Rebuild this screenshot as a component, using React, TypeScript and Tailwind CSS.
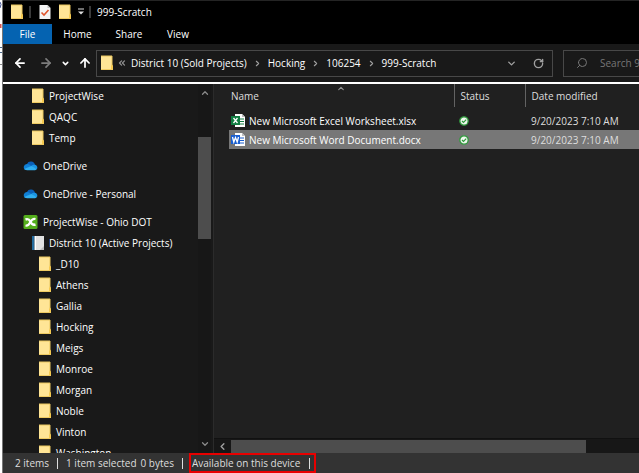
import React from 'react';
import { ArrowLeft, ArrowRight, ArrowUp, ChevronDown, ChevronLeft, ChevronRight, ChevronUp, ChevronsLeft, RotateCw, Search } from 'lucide-react';

interface TreeNode {
  name: string;
  icon: 'folder' | 'cloud' | 'pw' | 'book';
  level: number;
  spaced?: boolean;
}

const tree: TreeNode[] = [
  { name: 'ProjectWise', icon: 'folder', level: 1 },
  { name: 'QAQC', icon: 'folder', level: 1 },
  { name: 'Temp', icon: 'folder', level: 1 },
  { name: 'OneDrive', icon: 'cloud', level: 0, spaced: true },
  { name: 'OneDrive - Personal', icon: 'cloud', level: 0, spaced: true },
  { name: 'ProjectWise - Ohio DOT', icon: 'pw', level: 0, spaced: true },
  { name: 'District 10 (Active Projects)', icon: 'book', level: 1 },
  { name: '_D10', icon: 'folder', level: 2 },
  { name: 'Athens', icon: 'folder', level: 2 },
  { name: 'Gallia', icon: 'folder', level: 2 },
  { name: 'Hocking', icon: 'folder', level: 2 },
  { name: 'Meigs', icon: 'folder', level: 2 },
  { name: 'Monroe', icon: 'folder', level: 2 },
  { name: 'Morgan', icon: 'folder', level: 2 },
  { name: 'Noble', icon: 'folder', level: 2 },
  { name: 'Vinton', icon: 'folder', level: 2 },
  { name: 'Washington', icon: 'folder', level: 2 },
];

const indent = ['pl-5', 'pl-[29px]', 'pl-9'];

const files = [
  { name: 'New Microsoft Excel Worksheet.xlsx', kind: 'excel', date: '9/20/2023 7:10 AM', selected: false },
  { name: 'New Microsoft Word Document.docx', kind: 'word', date: '9/20/2023 7:10 AM', selected: true },
];

const crumbs = ['District 10 (Sold Projects)', 'Hocking', '106254', '999-Scratch'];

const FolderIcon = () => (
  <svg viewBox="0 0 12 16" className="w-3 h-4 shrink-0">
    <path d="M0 1h11v9l1 1v4H0z" fill="#ffe596" />
    <path d="M0 1h11v9" fill="none" stroke="#e9c65e" strokeWidth="1" />
    <path d="M10 10.500l1-1 1 1V15h-2z" fill="#f6c94f" />
    <path d="M0 14.500h12" stroke="#efcb62" />
  </svg>
);

const CloudIcon = () => (
  <svg viewBox="0 2 16 11" className="w-[15px] h-[11px] shrink-0">
    <path d="M4.200 5.900A4.600 4.600 0 0 1 12.800 6.800L9 10 4 8z" fill="#0a5fb8" />
    <path d="M4.200 5.900c2 0 3.100 1 4.400 1.900L3 12.300A3.300 3.300 0 0 1 4.200 5.900z" fill="#1080d6" />
    <path d="M8.600 8c1.500-1.500 3-1.500 4.200-1.200a3 3 0 0 1 2 4.500L8 10z" fill="#1a94e4" />
    <path d="M1.300 11.300 8.600 8l6.300 3.300c-.5.800-1.200 1.200-2 1.200H4.200c-1.200 0-2.300-.4-2.900-1.200z" fill="#30aff0" />
  </svg>
);

const ProjectWiseIcon = () => (
  <svg viewBox="0 0 14 14" className="w-[15px] h-[14px] shrink-0">
    <rect width="14" height="14" rx="1.500" fill="#54ae1c" />
    <path d="M2 4.500c3.500-1.200 4 .5 5 2.500s2 3.500 5 2.500" fill="none" stroke="#fff" strokeWidth="2.400" />
    <path d="M2 10.500c3 .5 4-1.500 5-3.500s2.500-3.500 5-3" fill="none" stroke="#fff" strokeWidth="2.200" />
  </svg>
);

const BookIcon = () => (
  <svg viewBox="0 0 12 16" className="w-3 h-4 shrink-0">
    <path d="M3 1h9v14H3z" fill="#e2e2e2" />
    <path d="M0 1h2.500v14H0z" fill="#236a9c" />
    <path d="M2.500 1h1.500v14H2.500z" fill="#fff" />
    <path d="M8 15l4-4v4z" fill="#bdbdbd" />
  </svg>
);

const TaskIcon = () => (
  <svg viewBox="0 0 12 16" className="w-3 h-4 shrink-0">
    <path d="M.5 1h8l3 3v11H.5z" fill="#f4f4f4" />
    <path d="M8.500 1l3 3h-3z" fill="#c0c0c0" />
    <path d="M2.500 8.500L5 11l4.500-5" fill="none" stroke="#e0562e" strokeWidth="1.600" />
  </svg>
);

const OfficeIcon = ({ kind }: { kind: string }) => {
  const color = kind === 'excel' ? '#107c41' : '#1a5fd0';
  return (
    <svg viewBox="0 0 15 15" className="w-[15px] h-[15px] shrink-0">
      <path d="M4 1h7l3 3v10H4z" fill="#fff" />
      <path d="M11 1l3 3h-3z" fill="#bdbdbd" />
      <path d="M9 6h4M9 8.500h4M9 11h4" stroke={color} strokeWidth="1" />
      <path d="M0 3h9v9H0z" fill={color} />
      <path
        d={kind === 'excel' ? 'M2.500 5l4 5M6.500 5l-4 5' : 'M1.500 5l1.300 5L4.500 5.500 6.200 10 7.500 5'}
        fill="none"
        stroke="#fff"
        strokeWidth="1.300"
      />
    </svg>
  );
};

const SyncedIcon = () => (
  <svg viewBox="0 0 10 10" className="block w-[10px] h-[10px]" role="img" aria-label="Available on this device">
    <circle cx="5" cy="5" r="4.200" fill="#eef7ee" stroke="#2f9a3c" strokeWidth="1.300" />
    <path d="M3 5l1.500 1.500L7.200 3.700" fill="none" stroke="#2f9a3c" strokeWidth="1.200" />
  </svg>
);

const icons = {
  folder: FolderIcon,
  cloud: CloudIcon,
  pw: ProjectWiseIcon,
  book: BookIcon,
};

// sliver of the window behind this one
const BackWindowEdge = () => (
  <div className="w-[3px] shrink-0 border-r border-[#777] bg-white">
    <svg viewBox="0 0 2 90" className="w-0.5 h-[90px]">
      <path d="M0 2q2 2 0 6" fill="none" stroke="#4a5a9a" />
      <path d="M0 24h1.500v4H0z" fill="#d9534f" />
      <path d="M0 47.500h2M0 52.500h2" stroke="#4d6a8c" />
      <path d="M0 64.500h2" stroke="#8a8a8a" />
    </svg>
  </div>
);

const TitleBar = () => (
  <header className="flex items-center h-6 shrink-0 pl-2 pb-0.5 bg-black border-t border-[#242424]">
    <FolderIcon />
    <span className="w-0.5 h-3 ml-1.5 mr-2 bg-[#3a3a3a]" />
    <button aria-label="Properties"><TaskIcon /></button>
    <button aria-label="New folder" className="ml-2"><FolderIcon /></button>
    <button aria-label="Customize Quick Access Toolbar" className="ml-1.5">
      <svg viewBox="0 0 8 8" className="w-2 h-2">
        <path d="M1 1h6" stroke="#ddd" />
        <path d="M1 3.500h6L4 6.500z" fill="#ddd" />
      </svg>
    </button>
    <span className="w-0.5 h-3 ml-1 mr-1.5 bg-[#3a3a3a]" />
    <h1>999-Scratch</h1>
  </header>
);

const Ribbon = () => (
  <nav className="flex h-5 shrink-0 bg-black">
    <button className="w-[49px] bg-[#0563b1]">File</button>
    <button className="w-[51px]">Home</button>
    <button className="w-[52px]">Share</button>
    <button className="w-[46px]">View</button>
  </nav>
);

const AddressBar = () => (
  <div className="flex items-center h-[38px] shrink-0 bg-[#191919]">
    <div className="flex items-center w-[93px] shrink-0 pl-2.5 text-white">
      <button aria-label="Back"><ArrowLeft size={14} strokeWidth={3} /></button>
      <button aria-label="Forward" className="ml-3 text-[#7d7d7d]"><ArrowRight size={14} strokeWidth={3} /></button>
      <button aria-label="Recent locations" className="ml-2"><ChevronDown size={9} strokeWidth={4} /></button>
      <button aria-label="Up" className="ml-2"><ArrowUp size={14} strokeWidth={3} /></button>
    </div>
    <div className="flex items-center w-[457px] shrink-0 h-[27px] pl-1 border border-[#484848]">
      <FolderIcon />
      <ChevronsLeft size={10} strokeWidth={3} className="ml-1 text-[#909090]" />
      <ol className="flex items-center ml-1 whitespace-nowrap">
        {crumbs.map((c, i) => (
          <li key={c} className="flex items-center">
            {i > 0 && <ChevronRight size={9} strokeWidth={3} className="mx-1.5 text-[#a0a0a0]" />}
            <a href="#">{c}</a>
          </li>
        ))}
      </ol>
      <button aria-label="Previous locations" className="ml-auto text-[#a0a0a0]"><ChevronDown size={11} strokeWidth={3} /></button>
      <button aria-label="Refresh" className="ml-4 mr-2 text-[#a0a0a0]"><RotateCw size={11} strokeWidth={3} /></button>
    </div>
    <label className="flex items-center flex-1 min-w-0 h-[27px] ml-2.5 pl-3 border border-r-0 border-[#484848] text-[#777]">
      <Search size={12} className="shrink-0 -scale-x-100" />
      <input
        aria-label="Search"
        placeholder="Search 999-Scratch"
        className="flex-1 min-w-0 ml-3 bg-transparent outline-none placeholder:text-[#777]"
      />
    </label>
  </div>
);

const Sidebar = () => (
  <aside className="flex w-[211px] shrink-0 border-r border-[#2b2b2b] bg-[#191919]">
    <ul className="flex-1 min-w-0 pt-px overflow-hidden">
      {tree.map((node) => {
        const Icon = icons[node.icon];
        return (
          <li key={node.name} className={node.spaced ? 'mt-[7px]' : ''}>
            <a href="#" className={`flex items-center gap-[5px] h-[21px] whitespace-nowrap ${indent[node.level]}`}>
              <Icon />
              {node.name}
            </a>
          </li>
        );
      })}
    </ul>
    <div className="flex flex-col items-center w-[13px] mr-0.5 py-1 shrink-0 bg-[#171717] text-[#8a8a8a]">
      <ChevronUp size={10} strokeWidth={3} />
      <div className="w-full h-[102px] mt-[39px] bg-[#4d4d4d]" />
      <ChevronDown size={10} strokeWidth={3} className="mt-auto" />
    </div>
  </aside>
);

const FileList = () => (
  <main className="flex flex-col flex-1 min-w-0 bg-[#202020]">
    <div className="flex-1 pl-[15px] overflow-hidden">
      <table className="w-full table-fixed border-collapse whitespace-nowrap">
        <colgroup>
          <col className="w-[225px]" />
          <col className="w-[71px]" />
          <col />
        </colgroup>
        <thead className="text-left text-[#dedede]">
          <tr className="h-[23px]">
            <th className="relative p-0 pl-0.5 font-normal border-r border-[#636363]">
              Name
              <ChevronUp size={9} strokeWidth={3} className="absolute top-0 left-1/2 -translate-x-1/2 text-[#909090]" />
            </th>
            <th className="p-0 pl-1.5 font-normal border-r border-[#636363]">Status</th>
            <th className="p-0 pl-1.5 font-normal">Date modified</th>
          </tr>
          <tr className="h-1" />
        </thead>
        <tbody>
          {files.map((f) => (
            <tr key={f.name} className={f.selected ? 'h-[19px] bg-[#777]' : 'h-[19px]'}>
              <td className="p-0 pl-0.5">
                <div className="flex items-center gap-[3px]">
                  <OfficeIcon kind={f.kind} />
                  {f.name}
                </div>
              </td>
              <td className="p-0 pl-[5px]"><SyncedIcon /></td>
              <td className="p-0 pl-1.5 text-[#dedede]">{f.date}</td>
            </tr>
          ))}
        </tbody>
      </table>
    </div>
    <div className="flex items-center h-[15px] shrink-0 border-t border-[#111] bg-[#171717] text-[#a0a0a0]">
      <ChevronLeft size={11} strokeWidth={3} className="shrink-0 mx-[3px]" />
      <div className="w-[355px] h-[13px] bg-[#4d4d4d]" />
    </div>
  </main>
);

const StatusBar = () => (
  <footer className="flex items-center h-5 shrink-0 pl-3 bg-[#333] text-[#dedede] whitespace-nowrap">
    <span>2 items</span>
    <span className="w-px h-[11px] mx-2 bg-[#dedede]" />
    <span>1 item selected</span>
    <span className="ml-1">0 bytes</span>
    <span className="w-px h-[11px] ml-2 mr-1.5 bg-[#dedede]" />
    <div className="flex items-center justify-between w-[127px] h-5 pl-px pr-1 border-2 border-[#e80000]">
      Available on this device
      <span className="w-px h-[11px] bg-[#dedede]" />
    </div>
  </footer>
);

const App: React.FC = () => (
  <div className="flex h-screen overflow-hidden bg-white font-['Open_Sans','Noto_Sans',sans-serif] text-[10px] leading-4 text-white">
    <BackWindowEdge />
    <div className="flex flex-col flex-1 min-w-0">
      <TitleBar />
      <Ribbon />
      <AddressBar />
      <div className="flex flex-1 min-h-0 border-t-2 border-white">
        <Sidebar />
        <FileList />
      </div>
      <StatusBar />
    </div>
  </div>
);

export default App;
